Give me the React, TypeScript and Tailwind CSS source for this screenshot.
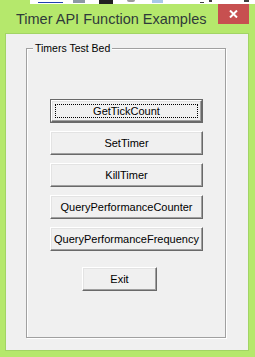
import type { ReactNode } from "react";

const BUTTONS = [
  "GetTickCount",
  "SetTimer",
  "KillTimer",
  "QueryPerformanceCounter",
  "QueryPerformanceFrequency",
] as const;

function Bevel({ children, className }: { children: ReactNode; className?: string }) {
  // classic 3D button edge: white / light on top-left, dark shadows bottom-right
  return (
    <div
      className={`flex items-center justify-center border border-t-white border-l-white border-r-[#696969] border-b-[#696969] bg-[#f0f0f0] shadow-[inset_-1px_-1px_0_#a0a0a0,inset_1px_1px_0_#e3e3e3] ${className ?? ""}`}
    >
      {children}
    </div>
  );
}

function WinButton({ label, isDefault, width }: { label: string; isDefault?: boolean; width: string }) {
  if (isDefault) {
    return (
      <div className={`h-[24px] ${width} border border-[#696969]`}>
        <Bevel className="relative h-full w-full">
          <span className="absolute inset-[3px] border border-dotted border-black" />
          <span className="text-[11px] leading-none text-black">{label}</span>
        </Bevel>
      </div>
    );
  }
  return (
    <Bevel className={`h-[24px] ${width}`}>
      <span className="text-[11px] leading-none text-black">{label}</span>
    </Bevel>
  );
}

export default function App() {
  return (
    <div
      className="flex h-[357px] w-[255px] flex-col overflow-hidden bg-[#b5e86c]"
      style={{ fontFamily: '"Liberation Sans", Arial, sans-serif' }}
    >
      {/* strip of the desktop toolbar above the window */}
      <div className="flex h-[4px] shrink-0">
        <div className="w-[30px]" />
        <div className="flex flex-1 items-start bg-white">
          <span className="ml-[8px] mt-[2px] h-[1px] w-[25px] bg-[#2040b0]" />
          <span className="ml-[10px] h-[3px] w-[12px] bg-[#8c98a4]" />
          <span className="ml-[14px] h-[4px] w-[14px] bg-[#202020]" />
          <span className="ml-[14px] h-[2px] w-[8px] rounded-b-full bg-[#9a9a9a]" />
          <span className="ml-[17px] h-[3px] w-[11px] bg-[#a8c8e8]" />
          <span className="ml-[37px] mt-[2px] h-[1px] w-[4px] bg-[#404040]" />
          <span className="ml-[5px] h-[2px] w-[3px] bg-[#404040]" />
          <span className="ml-[32px] h-[2px] w-[5px] bg-[#404040]" />
        </div>
      </div>

      {/* title bar */}
      <div className="flex h-[29px] shrink-0 items-start">
        <span className="mt-[1px] pl-[16px] text-[14.5px] leading-[29px] text-[#2f3a3a]">
          Timer API Function Examples
        </span>
        <button
          type="button"
          className="ml-auto mr-[6px] flex h-[20px] w-[31px] items-center justify-center bg-[#c75050]"
        >
          <svg width="9" height="8" viewBox="0 0 9 8">
            <path d="M1 0.5 L8 7.5 M8 0.5 L1 7.5" stroke="white" strokeWidth="2" />
          </svg>
        </button>
      </div>

      {/* client area */}
      <div className="ml-[5px] h-[318px] w-[244px] border border-[#a2d465] bg-[#f0f0f0]">
        <div className="relative ml-[20px] mt-[14px] h-[290px] w-[200px] border border-[#a0a0a0] shadow-[1px_1px_0_white,inset_1px_1px_0_white]">
          <span className="absolute left-[6px] top-[-7px] bg-[#f0f0f0] px-[2px] text-[10.5px] leading-[12px] text-black">
            Timers Test Bed
          </span>
          <div className="flex flex-col gap-[8px] pl-[23px] pt-[50px]">
            {BUTTONS.map((label, i) => (
              <WinButton key={label} label={label} isDefault={i === 0} width="w-[153px]" />
            ))}
            <div className="mt-[8px] pl-[32px]">
              <WinButton label="Exit" width="w-[75px]" />
            </div>
          </div>
        </div>
      </div>
    </div>
  );
}
